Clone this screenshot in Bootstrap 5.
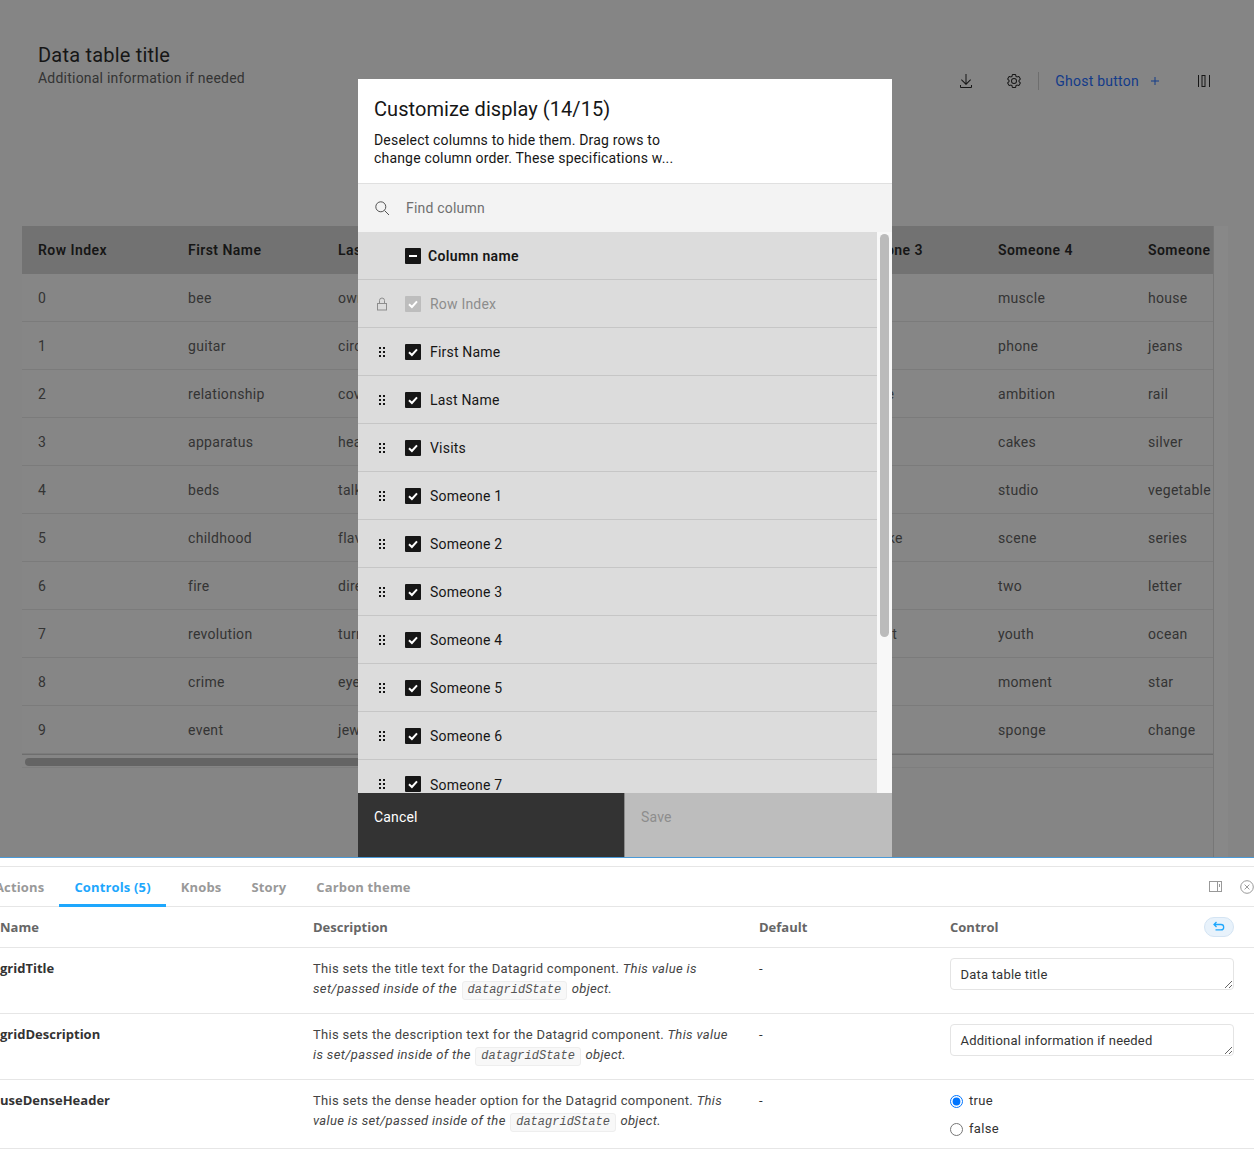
<!DOCTYPE html>
<html lang="en">
<head>
<meta charset="utf-8">
<title>Customize display</title>
<link href="https://cdn.jsdelivr.net/npm/bootstrap@5.3.0/dist/css/bootstrap.min.css" rel="stylesheet">
<style>
html,body{height:1155px;overflow:hidden;background:#fff}
body{font-family:Roboto,"Liberation Sans",sans-serif;font-size:14px;letter-spacing:.16px;color:#161616}
.stage{height:858px;background:#f4f4f4;border-bottom:1px solid #4a9ad8;position:relative;overflow:hidden}
.dt-wrap{margin-left:22px;width:1206px}
.dt-head{height:226px;padding:41px 0 0 16px}
.dt-title{font-size:20px;line-height:28px;color:#161616;letter-spacing:.2px;font-weight:400}
.dt-sub{font-size:14px;line-height:18px;color:#525252;letter-spacing:.22px}
.dt-tools{margin-top:16px}
.tool-btn{width:48px;height:48px;padding:0;border:0;border-radius:0;color:#161616;display:flex;align-items:center;justify-content:center;background:none}
.tool-sep{width:1px;height:18px;background:#c6c6c6;margin-top:15px}
.ghost{height:48px;border:0;border-radius:0;background:none;padding:0 17px 0 16px;color:#0f62fe;font-size:14px;letter-spacing:.25px;display:flex;align-items:center;gap:8px}
.dt-body{height:631px}
.dt-main{width:1192px;overflow:hidden;border-right:1px solid #d9d9d9;height:100%}
.dt-strip{width:14px;background:#fafafa}
table.grid{table-layout:fixed;width:1272px;margin:0;border-collapse:separate;border-spacing:0}
table.grid th,table.grid td{height:48px;padding:1px 0 0 16px;vertical-align:middle;white-space:nowrap;overflow:hidden;background:#f7f7f7;color:#525252;font-size:14px;font-weight:400;letter-spacing:.3px;border:0;border-bottom:1px solid #e0e0e0;box-shadow:none}
table.grid th{background:#cfcfcf;color:#161616;font-weight:600;border-bottom:0;letter-spacing:.45px;padding-top:0}
.hbar{height:14px;padding-top:3px;border-bottom:1px solid #e6e6e6;border-top:1px solid #c6c6c6}
.hbar i{display:block;width:400px;height:8px;margin-left:3px;background:#b3b3b3;border-radius:4px}
.dim{position:absolute;inset:0;background:rgba(22,22,22,.5)}
.cd-modal{position:absolute;left:358px;top:79px;width:534px;height:778px;background:#fff;display:flex;flex-direction:column}
.cd-top{height:105px;padding:16px 16px 0;border-bottom:1px solid #e0e0e0;flex:none}
.cd-top h2{font-size:20px;line-height:28px;font-weight:400;margin:0 0 8px;letter-spacing:.07px}
.cd-top p{font-size:14px;line-height:18px;margin:0;color:#161616;letter-spacing:.18px}
.cd-find{height:48px;background:#f3f3f3;flex:none;padding-left:16px;gap:16px;color:#6f6f6f}
.cd-find input{border:0;background:none;outline:0;padding:0;font-size:14px;letter-spacing:.2px;width:300px;color:#161616}
.cd-find input::placeholder{color:#6f6f6f;opacity:1}
.cd-list{flex:1;min-height:0;overflow:hidden}
.cd-rows{flex:1;background:#dcdcdc;border-radius:0;overflow:hidden}
.cd-rows .list-group-item{height:48px;flex:none;background:#dcdcdc;border:0;border-bottom:1px solid #c6c6c6;border-radius:0;padding:2px 0 0;display:flex;align-items:center;color:#161616;font-size:14px;letter-spacing:.2px}
.cd-grip{width:47px;flex:none;display:flex;justify-content:center;padding-left:1px;margin-top:-2px;color:#161616}
.cd-rows .form-check-input{width:16px;height:16px;margin:-2px 9px 0 0;border:0;border-radius:1px;background-color:#161616;opacity:1;flex:none;background-size:16px;background-image:url("data:image/svg+xml,%3Csvg xmlns='http://www.w3.org/2000/svg' viewBox='0 0 16 16'%3E%3Cpath fill='none' stroke='%23fff' stroke-width='2' d='M4 8.3l2.9 2.7L12 5.3'/%3E%3C/svg%3E")}
.cd-rows .cb-mixed{background-image:url("data:image/svg+xml,%3Csvg xmlns='http://www.w3.org/2000/svg' viewBox='0 0 16 16'%3E%3Crect x='4' y='7' width='8' height='2' fill='%23fff'/%3E%3C/svg%3E");margin-right:7px}
.cd-rows .form-check-input:disabled{background-color:#bdbdbd;pointer-events:none}
.cd-off{color:#8d8d8d!important}
.cd-head-label{font-weight:600;letter-spacing:.35px}
.cd-track{width:15px;flex:none;background:#f8f8f8;padding:2px 3px 0}
.cd-track i{display:block;height:403px;background:#bbb;border-radius:5px}
.cd-foot{height:64px;flex:none;gap:1px;background:#8a8a8a}
.cd-foot .btn{border:0;border-radius:0;height:64px;text-align:left;padding:14px 16px 30px;font-size:14px;letter-spacing:.16px;line-height:20px;align-self:stretch}
.btn-cancel{background:#333;color:#fff;width:266px;flex:none}
.btn-save,.btn-save:disabled{background:#bdbdbd;color:#8d8d8d;opacity:1;flex:1}
.addon{font-family:Roboto,"Liberation Sans",sans-serif;font-size:13px;letter-spacing:.31px;color:#333;padding-top:8px;overflow:hidden}
.addon-bar{height:41px;border-top:1px solid #e6e6e6;border-bottom:1px solid #e6e6e6;margin:0}
.addon-tab{height:40px;line-height:40px;padding:0 15px;font-family:"Open Sans","Liberation Sans",sans-serif;font-weight:700;letter-spacing:.15px;color:#999;white-space:nowrap;border-bottom:3px solid transparent;box-sizing:border-box}
.addon-tab.on{color:#1ea7fd;border-bottom-color:#1ea7fd}
.addon-first{margin-left:-20px}
.addon-ico{width:14px;height:14px;margin-left:17px;color:#999;flex:none}
table.args{table-layout:fixed;width:1254px;margin:0;border-collapse:separate;border-spacing:0}
table.args th,table.args td{padding:11px 0 0;vertical-align:top;font-size:13px;line-height:20px;color:#333;background:#fff;border:0;border-bottom:1px solid #e6e6e6;box-shadow:none}
table.args th{height:41px;color:#666;font-family:"Open Sans","Liberation Sans",sans-serif;font-weight:700;letter-spacing:0;vertical-align:middle;padding:0;position:relative}
table.args td.arg{font-family:"Open Sans","Liberation Sans",sans-serif;font-weight:700;letter-spacing:0;padding-top:10px}
table.args td.ctl{padding-top:10px}
table.args td.des{color:#444}
table.args td.des em{letter-spacing:.35px}
.code-tag{font-family:"Liberation Mono",monospace;font-size:12px;line-height:17px;display:inline-block;padding:0 5px;margin:0 1px;background:#f8f8f8;border:1px solid #eee;border-radius:3px;color:#555;letter-spacing:0}
textarea.arg-input{width:284px;height:32px;min-height:32px;font-size:13px;line-height:20px;padding:6px 10px 4px 9.5px;border:1px solid #e4e4e4;border-radius:4px;color:#333;letter-spacing:.2px;font-family:inherit;margin-top:0;display:block}
.rst{width:30px;height:20px;padding:0;border-radius:10px;background:#e8f2fb;border:1px solid #d4e4f3;color:#1ea7fd;display:flex;align-items:center;justify-content:center;margin:0}
.rad{gap:6px;height:20px;margin-bottom:8px}
.rad input{margin:0;width:13px;height:13px}
.cell-ctl{width:284px}
</style>
</head>
<body>
<div class="stage">
  <div class="dt-wrap">
    <div class="dt-head d-flex justify-content-between">
      <div>
        <div class="dt-title">Data table title</div>
        <div class="dt-sub">Additional information if needed</div>
      </div>
      <div class="dt-tools d-flex align-items-start">
        <button class="tool-btn btn" aria-label="Download"><svg width="16" height="16" viewBox="0 0 32 32" fill="currentColor"><path d="M26 24v4H6v-4H4v4a2 2 0 002 2h20a2 2 0 002-2v-4zM26 14l-1.41-1.41L17 20.17V2h-2v18.17l-7.59-7.58L6 14l10 10 10-10z"/></svg></button>
        <button class="tool-btn btn" aria-label="Settings"><svg width="16" height="16" viewBox="0 0 32 32" fill="currentColor"><path d="M27,16.76c0-.25,0-.5,0-.76s0-.51,0-.77l1.92-1.68A2,2,0,0,0,29.3,11L26.94,7a2,2,0,0,0-1.73-1,2,2,0,0,0-.64.1l-2.43.82a11.35,11.35,0,0,0-1.31-.75l-.51-2.52a2,2,0,0,0-2-1.61H13.64a2,2,0,0,0-2,1.61l-.51,2.52a11.48,11.48,0,0,0-1.32.75L7.43,6.06A2,2,0,0,0,6.79,6,2,2,0,0,0,5.06,7L2.7,11a2,2,0,0,0,.41,2.51L5,15.24c0,.25,0,.5,0,.76s0,.51,0,.77L3.11,18.45A2,2,0,0,0,2.7,21L5.06,25a2,2,0,0,0,1.73,1,2,2,0,0,0,.64-.1l2.43-.82a11.35,11.35,0,0,0,1.31.75l.51,2.52a2,2,0,0,0,2,1.61h4.72a2,2,0,0,0,2-1.61l.51-2.52a11.48,11.48,0,0,0,1.32-.75l2.42.82a2,2,0,0,0,.64.1,2,2,0,0,0,1.73-1L29.3,21a2,2,0,0,0-.41-2.51ZM25.21,24l-3.43-1.16a8.86,8.86,0,0,1-2.71,1.57L18.36,28H13.64l-.71-3.55a9.36,9.36,0,0,1-2.7-1.57L6.79,24,4.43,20l2.72-2.4a8.9,8.9,0,0,1,0-3.13L4.43,12,6.79,8l3.43,1.16a8.86,8.86,0,0,1,2.71-1.57L13.64,4h4.72l.71,3.55a9.36,9.36,0,0,1,2.7,1.57L25.21,8,27.57,12l-2.72,2.4a8.9,8.9,0,0,1,0,3.13L27.57,20Z"/><path d="M16,22a6,6,0,1,1,6-6A5.94,5.94,0,0,1,16,22Zm0-10a3.91,3.91,0,0,0-4,4,3.91,3.91,0,0,0,4,4,3.91,3.91,0,0,0,4-4A3.91,3.91,0,0,0,16,12Z"/></svg></button>
        <span class="tool-sep"></span>
        <button class="ghost btn">Ghost button <svg width="16" height="16" viewBox="0 0 16 16" fill="currentColor"><path d="M8.5 4h-1v3.5H4v1h3.5V12h1V8.5H12v-1H8.5z"/></svg></button>
        <button class="tool-btn btn" aria-label="Columns"><svg width="16" height="16" viewBox="0 0 16 16" fill="none" stroke="currentColor"><path d="M2.5 2v12M13.5 2v12"/><rect x="6" y="2.5" width="3" height="11"/></svg></button>
      </div>
    </div>
    <div class="dt-body d-flex">
      <div class="dt-main">
        <table class="grid table">
          <colgroup><col style="width:150px"><col style="width:150px"><col style="width:510px"><col style="width:150px"><col style="width:150px"><col style="width:162px"></colgroup>
          <thead><tr><th>Row Index</th><th>First Name</th><th>Last Name</th><th>Someone 3</th><th>Someone 4</th><th>Someone 5</th></tr></thead>
          <tbody>
          <tr><td>0</td><td>bee</td><td>owner</td><td></td><td>muscle</td><td>house</td></tr>
          <tr><td>1</td><td>guitar</td><td>circle</td><td></td><td>phone</td><td>jeans</td></tr>
          <tr><td>2</td><td>relationship</td><td>cover</td><td>cheese</td><td>ambition</td><td>rail</td></tr>
          <tr><td>3</td><td>apparatus</td><td>heart</td><td></td><td>cakes</td><td>silver</td></tr>
          <tr><td>4</td><td>beds</td><td>talk</td><td></td><td>studio</td><td>vegetable</td></tr>
          <tr><td>5</td><td>childhood</td><td>flavor</td><td>pancake</td><td>scene</td><td>series</td></tr>
          <tr><td>6</td><td>fire</td><td>direction</td><td></td><td>two</td><td>letter</td></tr>
          <tr><td>7</td><td>revolution</td><td>turn</td><td>student</td><td>youth</td><td>ocean</td></tr>
          <tr><td>8</td><td>crime</td><td>eyes</td><td></td><td>moment</td><td>star</td></tr>
          <tr><td>9</td><td>event</td><td>jewel</td><td></td><td>sponge</td><td>change</td></tr>
          </tbody>
        </table>
        <div class="hbar"><i></i></div>
      </div>
      <div class="dt-strip"></div>
    </div>
  </div>
  <div class="dim"></div>
  <div class="cd-modal">
    <div class="cd-top">
      <h2>Customize display (14/15)</h2>
      <p>Deselect columns to hide them. Drag rows to<br>change column order. These specifications w...</p>
    </div>
    <div class="cd-find d-flex align-items-center">
      <svg width="16" height="16" viewBox="0 0 16 16" fill="none" stroke="#525252"><circle cx="6.8" cy="6.8" r="5"/><path d="M10.5 10.5l4.5 4.5"/></svg>
      <input type="text" placeholder="Find column" aria-label="Find column">
    </div>
    <div class="cd-list d-flex">
      <div class="cd-rows list-group list-group-flush">
        <div class="list-group-item"><span class="cd-grip"></span><input class="form-check-input cb-mixed" type="checkbox" checked aria-label="Column name"><span class="cd-head-label">Column name</span></div>
        <div class="list-group-item cd-off"><span class="cd-grip"><svg width="16" height="16" viewBox="0 0 16 16" fill="none" stroke="#8d8d8d"><path d="M5.5 7V4.5a2.5 2.5 0 015 0V7"/><rect x="3.5" y="7.5" width="9" height="6.5"/></svg></span><input class="form-check-input" type="checkbox" checked disabled aria-label="Row Index">Row Index</div>
        <div class="list-group-item"><span class="cd-grip"><svg width="8" height="12" viewBox="0 0 8 12" fill="#161616"><path d="M1 1h2v2H1zM5 1h2v2H5zM1 5h2v2H1zM5 5h2v2H5zM1 9h2v2H1zM5 9h2v2H5z"/></svg></span><input class="form-check-input" type="checkbox" checked aria-label="First Name">First Name</div>
        <div class="list-group-item"><span class="cd-grip"><svg width="8" height="12" viewBox="0 0 8 12" fill="#161616"><path d="M1 1h2v2H1zM5 1h2v2H5zM1 5h2v2H1zM5 5h2v2H5zM1 9h2v2H1zM5 9h2v2H5z"/></svg></span><input class="form-check-input" type="checkbox" checked aria-label="Last Name">Last Name</div>
        <div class="list-group-item"><span class="cd-grip"><svg width="8" height="12" viewBox="0 0 8 12" fill="#161616"><path d="M1 1h2v2H1zM5 1h2v2H5zM1 5h2v2H1zM5 5h2v2H5zM1 9h2v2H1zM5 9h2v2H5z"/></svg></span><input class="form-check-input" type="checkbox" checked aria-label="Visits">Visits</div>
        <div class="list-group-item"><span class="cd-grip"><svg width="8" height="12" viewBox="0 0 8 12" fill="#161616"><path d="M1 1h2v2H1zM5 1h2v2H5zM1 5h2v2H1zM5 5h2v2H5zM1 9h2v2H1zM5 9h2v2H5z"/></svg></span><input class="form-check-input" type="checkbox" checked aria-label="Someone 1">Someone 1</div>
        <div class="list-group-item"><span class="cd-grip"><svg width="8" height="12" viewBox="0 0 8 12" fill="#161616"><path d="M1 1h2v2H1zM5 1h2v2H5zM1 5h2v2H1zM5 5h2v2H5zM1 9h2v2H1zM5 9h2v2H5z"/></svg></span><input class="form-check-input" type="checkbox" checked aria-label="Someone 2">Someone 2</div>
        <div class="list-group-item"><span class="cd-grip"><svg width="8" height="12" viewBox="0 0 8 12" fill="#161616"><path d="M1 1h2v2H1zM5 1h2v2H5zM1 5h2v2H1zM5 5h2v2H5zM1 9h2v2H1zM5 9h2v2H5z"/></svg></span><input class="form-check-input" type="checkbox" checked aria-label="Someone 3">Someone 3</div>
        <div class="list-group-item"><span class="cd-grip"><svg width="8" height="12" viewBox="0 0 8 12" fill="#161616"><path d="M1 1h2v2H1zM5 1h2v2H5zM1 5h2v2H1zM5 5h2v2H5zM1 9h2v2H1zM5 9h2v2H5z"/></svg></span><input class="form-check-input" type="checkbox" checked aria-label="Someone 4">Someone 4</div>
        <div class="list-group-item"><span class="cd-grip"><svg width="8" height="12" viewBox="0 0 8 12" fill="#161616"><path d="M1 1h2v2H1zM5 1h2v2H5zM1 5h2v2H1zM5 5h2v2H5zM1 9h2v2H1zM5 9h2v2H5z"/></svg></span><input class="form-check-input" type="checkbox" checked aria-label="Someone 5">Someone 5</div>
        <div class="list-group-item"><span class="cd-grip"><svg width="8" height="12" viewBox="0 0 8 12" fill="#161616"><path d="M1 1h2v2H1zM5 1h2v2H5zM1 5h2v2H1zM5 5h2v2H5zM1 9h2v2H1zM5 9h2v2H5z"/></svg></span><input class="form-check-input" type="checkbox" checked aria-label="Someone 6">Someone 6</div>
        <div class="list-group-item"><span class="cd-grip"><svg width="8" height="12" viewBox="0 0 8 12" fill="#161616"><path d="M1 1h2v2H1zM5 1h2v2H5zM1 5h2v2H1zM5 5h2v2H5zM1 9h2v2H1zM5 9h2v2H5z"/></svg></span><input class="form-check-input" type="checkbox" checked aria-label="Someone 7">Someone 7</div>
      </div>
      <div class="cd-track"><i></i></div>
    </div>
    <div class="cd-foot d-flex">
      <button class="btn btn-cancel">Cancel</button>
      <button class="btn btn-save" disabled>Save</button>
    </div>
  </div>
</div>
<div class="addon">
  <div class="addon-bar d-flex align-items-start">
    <span class="addon-tab addon-first">Actions</span>
    <span class="addon-tab on">Controls (5)</span>
    <span class="addon-tab">Knobs</span>
    <span class="addon-tab">Story</span>
    <span class="addon-tab">Carbon theme</span>
    <div class="ms-auto d-flex align-items-center h-100">
      <svg class="addon-ico" viewBox="0 0 14 14" fill="none" stroke="currentColor"><rect x=".5" y="1.5" width="12" height="10"/><path d="M8.5 1.5v10M10.5 4v3"/></svg>
      <svg class="addon-ico" viewBox="0 0 14 14" fill="none" stroke="currentColor"><circle cx="7" cy="7" r="6.3"/><path d="M4.6 4.6l4.8 4.8M9.4 4.6l-4.8 4.8"/></svg>
    </div>
  </div>
  <table class="args table">
    <colgroup><col style="width:313px"><col style="width:446px"><col style="width:191px"><col style="width:304px"></colgroup>
    <thead><tr><th>Name</th><th>Description</th><th>Default</th><th><div class="d-flex justify-content-between align-items-center cell-ctl">Control<button class="rst btn" aria-label="Reset"><svg width="14" height="12" viewBox="0 0 14 12" fill="none" stroke="currentColor" stroke-width="1.3"><path d="M4.5 1L2 3.5 4.5 6M2 3.5h7a2.7 2.7 0 010 5.4H3.5"/></svg></button></div></th></tr></thead>
    <tbody>
      <tr style="height:66px"><td class="arg">gridTitle</td><td class="des">This sets the title text for the Datagrid component. <em>This value is<br>set/passed inside of the <code class="code-tag">datagridState</code> object.</em></td><td>-</td><td class="ctl"><textarea class="arg-input form-control" aria-label="gridTitle">Data table title</textarea></td></tr>
      <tr style="height:66px"><td class="arg">gridDescription</td><td class="des">This sets the description text for the Datagrid component. <em>This value<br>is set/passed inside of the <code class="code-tag">datagridState</code> object.</em></td><td>-</td><td class="ctl"><textarea class="arg-input form-control" aria-label="gridDescription">Additional information if needed</textarea></td></tr>
      <tr style="height:69px"><td class="arg">useDenseHeader</td><td class="des">This sets the dense header option for the Datagrid component. <em>This<br>value is set/passed inside of the <code class="code-tag">datagridState</code> object.</em></td><td>-</td><td><label class="rad d-flex align-items-center"><input type="radio" name="dense" checked>true</label><label class="rad d-flex align-items-center"><input type="radio" name="dense">false</label></td></tr>
    </tbody>
  </table>
</div>
<script src="https://cdn.jsdelivr.net/npm/bootstrap@5.3.0/dist/js/bootstrap.bundle.min.js"></script>
</body>
</html>
